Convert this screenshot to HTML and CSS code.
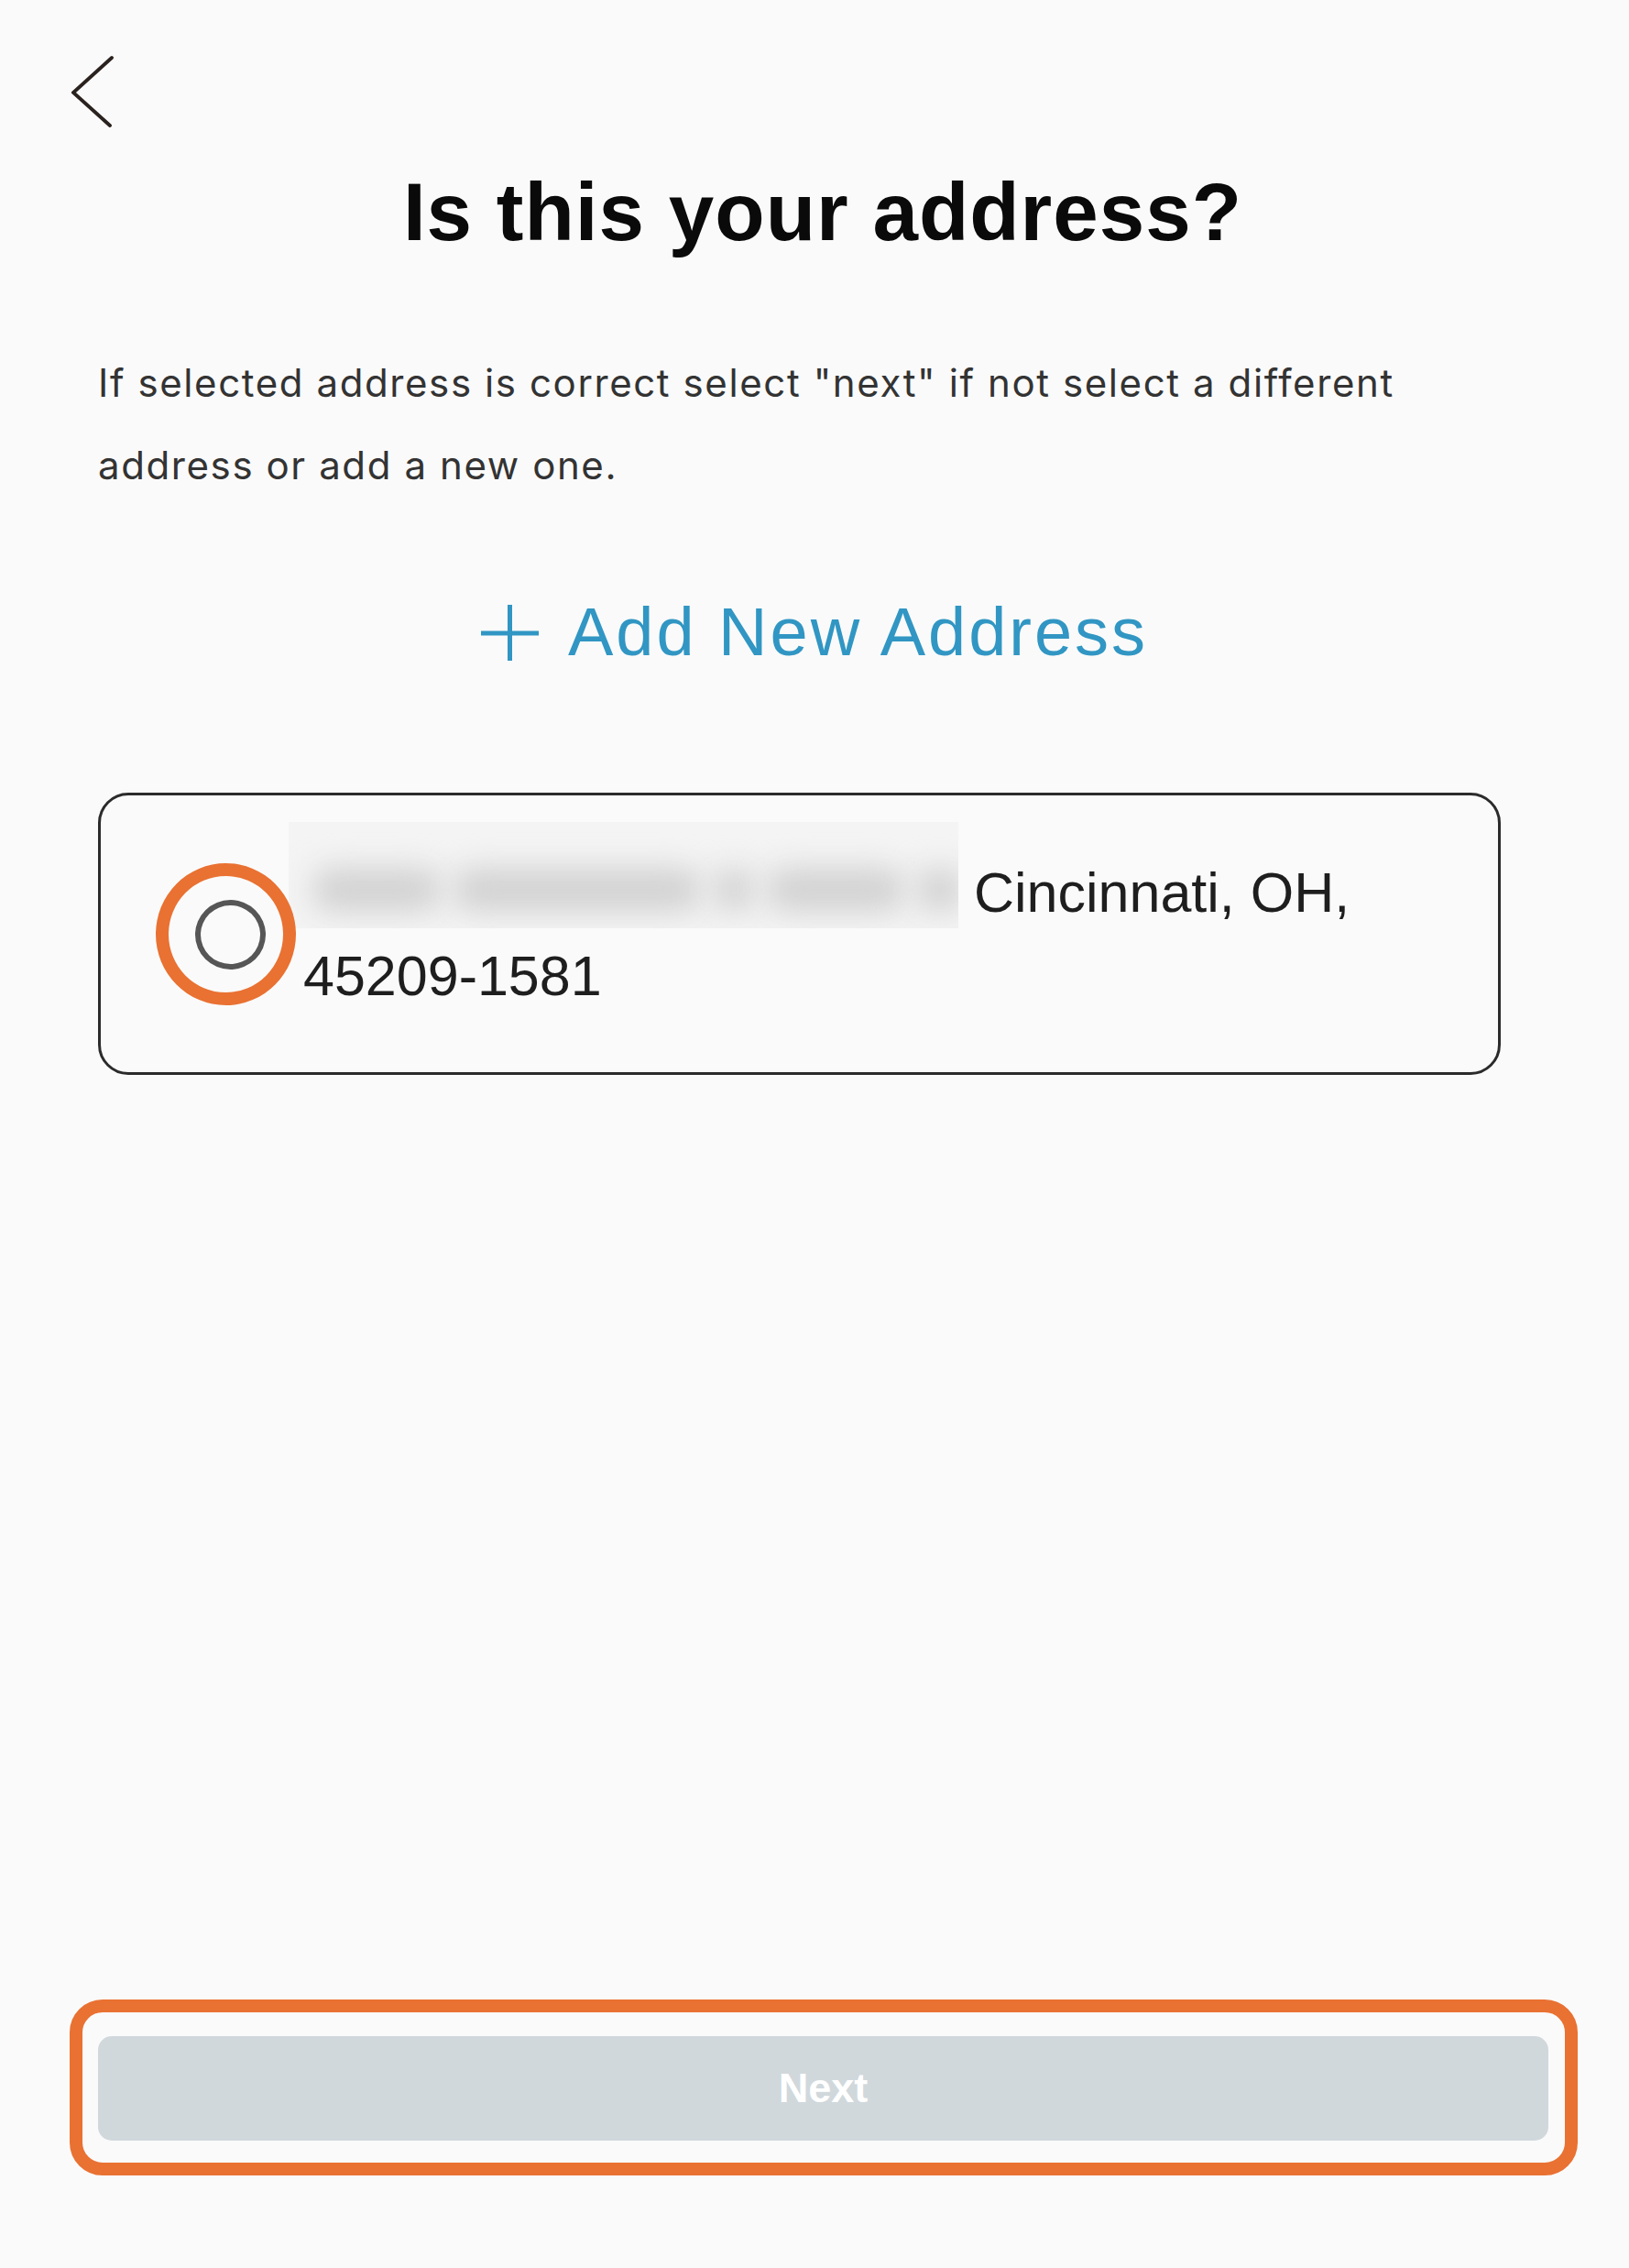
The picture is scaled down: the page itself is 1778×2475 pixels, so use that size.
FILE: index.html
```html
<!DOCTYPE html>
<html lang="en">
<head>
<meta charset="utf-8">
<title>Is this your address?</title>
<link rel="stylesheet" href="styles.css">
</head>
<body>
<div class="page">
  <header class="header">
    <button class="back" aria-label="Back">
      <svg class="back-icon" width="46" height="80" viewBox="0 0 46 80" fill="none">
        <path d="M44 3 L2 41 L42 77" stroke="#2a221e" stroke-width="3.8" stroke-linecap="round" stroke-linejoin="miter"/>
      </svg>
    </button>
  </header>

  <h1 class="title">Is this your address?</h1>

  <p class="desc">If selected address is correct select "next" if not select a different address or add a new one.</p>

  <a class="add-link" href="#">
    <svg class="plus" width="63" height="61" viewBox="0 0 63 61" fill="none">
      <path d="M31.5 0 V61 M0 31 H63" stroke="#3196c3" stroke-width="5"/>
    </svg>
    <span>Add New Address</span>
  </a>

  <label class="card">
    <span class="radio-wrap">
      <span class="radio"></span>
      <span class="ring"></span>
    </span>
    <span class="addr"><span class="redacted" aria-hidden="true"><i class="blob w1"></i><i class="blob w2"></i><i class="blob w3"></i><i class="blob w4"></i><i class="blob w5"></i></span> Cincinnati, OH, 45209-1581</span>
  </label>

  <div class="footer">
    <button class="next" disabled>Next</button>
  </div>
</div>
</body>
</html>
```

FILE: styles.css
```css
* { box-sizing: border-box; }

html, body {
  margin: 0;
  padding: 0;
  background: #fafafa;
}

body {
  font-family: "Liberation Sans", Arial, sans-serif;
  color: #111;
}

.page {
  display: flex;
  flex-direction: column;
  min-height: 2475px;
}

.header {
  padding: 60px 0 0 78px;
  height: 140px;
}

.back {
  display: block;
  padding: 0;
  margin: 0;
  border: 0;
  background: none;
  width: 46px;
  height: 80px;
}

.back-icon { display: block; }

.title {
  margin: 41px 0 0 0;
  padding-left: 18px;
  font-size: 89px;
  line-height: 100px;
  font-weight: 700;
  text-align: center;
  color: #0a0a0a;
  letter-spacing: 1px;
}

.desc {
  margin: 92px 0 0 107px;
  width: 1531px;
  font-family: "Inter", "Liberation Sans", sans-serif;
  font-size: 42px;
  line-height: 90px;
  letter-spacing: 1.6px;
  color: #333;
}

.add-link {
  margin-top: 92px;
  align-self: center;
  display: flex;
  align-items: center;
  gap: 32px;
  height: 90px;
  font-size: 74px;
  line-height: 90px;
  letter-spacing: 3px;
  color: #3196c3;
  text-decoration: none;
}

.plus { display: block; flex: none; }

.card {
  margin: 130px 0 0 107px;
  width: 1531px;
  height: 308px;
  border: 3px solid #2b2b2b;
  border-radius: 33px;
  display: flex;
  align-items: center;
  padding: 0 40px 0 103px;
  background: #fafafa;
}

.radio-wrap {
  position: relative;
  flex: none;
  width: 77px;
  height: 76px;
  margin-top: 2px;
}

.radio {
  display: block;
  width: 77px;
  height: 76px;
  border: 6px solid #565656;
  border-radius: 50%;
}

.ring {
  position: absolute;
  left: -43px;
  top: -40px;
  width: 153px;
  height: 155px;
  border: 14px solid #e97132;
  border-radius: 50%;
}

.addr {
  margin-left: 41px;
  font-size: 61px;
  line-height: 91px;
  color: #1e1e1e;
}

.redacted {
  display: inline-flex;
  align-items: flex-start;
  gap: 14px;
  vertical-align: baseline;
  width: 731px;
  height: 116px;
  margin: -30px 0 -19px -16px;
  padding: 50px 16px 0 26px;
  background: #f4f4f4;
  overflow: hidden;
}

.blob {
  display: block;
  height: 48px;
  background: #d2d2d2;
  border-radius: 20px;
  filter: blur(16px);
  flex: none;
}

.w1 { width: 140px; }
.w2 { width: 270px; }
.w3 { width: 44px; }
.w4 { width: 150px; }
.w5 { width: 50px; }

.footer {
  margin: auto 56px 101px 76px;
  border: 14px solid #e97132;
  border-radius: 36px;
  padding: 26px 18px 24px 17px;
}

.next {
  display: block;
  width: 100%;
  height: 114px;
  border: 0;
  border-radius: 15px;
  background: #d0d8dc;
  color: #ffffff;
  font-family: "Liberation Sans", Arial, sans-serif;
  font-size: 45px;
  font-weight: 700;
  padding: 0;
}
```
